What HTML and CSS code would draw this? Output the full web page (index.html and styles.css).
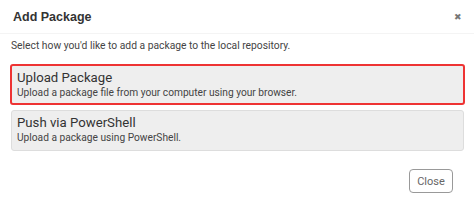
FILE: index.html
```html
<!DOCTYPE html>
<html lang="en">
<head>
    <meta charset="UTF-8">
    <title>Add Package</title>
    <link rel="stylesheet" href="styles.css">
</head>
<body>

    <div class="modal">
        <div class="modal-header">
            <h2>Add Package</h2>
            <span class="close-x">&#x2716;</span>
        </div>
        <div class="modal-body">
            <p class="intro">Select how you'd like to add a package to the local repository.</p>
            <div class="option selected">
                <div class="option-title">Upload Package</div>
                <div class="option-desc">Upload a package file from your computer using your browser.</div>
            </div>
            <div class="option">
                <div class="option-title">Push via PowerShell</div>
                <div class="option-desc">Upload a package using PowerShell.</div>
            </div>
        </div>
        <div class="modal-footer">
            <button type="button" class="close-button">Close</button>
        </div>
    </div>

</body>
</html>
```

FILE: styles.css
```css
body {
    font-family: Roboto, "Liberation Sans", sans-serif;
    margin: 0;
    padding: 0;
    background-color: #fff;
    color: #333;
}

.modal {
    width: 474px;
    height: 202px;
    display: flex;
    flex-direction: column;
}

.modal-header {
    display: flex;
    justify-content: space-between;
    align-items: center;
    padding: 0 12px 0 13px;
    height: 33px;
    border-bottom: 1px solid #f4f4f4;
}

.modal-header h2 {
    margin: 0;
    font-family: "Liberation Sans", Arial, sans-serif;
    font-size: 12.5px;
    font-weight: bold;
    color: #333;
}

.close-x {
    font-size: 9px;
    color: #777;
}

.modal-body {
    padding: 5px 9px 0 10px;
}

.intro {
    margin: 0 0 11px 1px;
    font-size: 10.3px;
    color: #444;
    line-height: 14px;
}

.option {
    background-color: #eee;
    border: 1px solid #ddd;
    border-radius: 3px;
    padding: 3px 5px 5px;
    margin: 0 1px 6px;
}

.option.selected {
    border: 2px solid #e33;
    margin: 0 0 5px;
    padding: 3px 5px 3px;
}

.option-title {
    font-size: 13.2px;
    line-height: 17px;
    color: #333;
}

.option-desc {
    font-size: 10.2px;
    line-height: 14px;
    color: #444;
}

.modal-footer {
    display: flex;
    justify-content: flex-end;
    padding: 12px 21px 0 0;
}

.close-button {
    font-family: Roboto, "Liberation Sans", sans-serif;
    background-color: #fff;
    border: 1px solid #999;
    border-radius: 4px;
    color: #666;
    font-size: 11px;
    padding: 0;
    width: 44px;
    height: 24px;
}
```
